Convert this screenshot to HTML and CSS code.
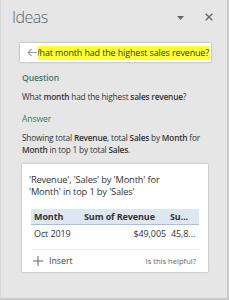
FILE: index.html
```html
<!DOCTYPE html>
<html>
<head>
<meta charset="utf-8">
<link rel="stylesheet" href="styles.css">
</head>
<body>
<div class="panel">
  <div class="header">
    <div class="title">Ideas</div>
    <div class="tools">
      <svg class="caret" width="7" height="4" viewBox="0 0 7 4"><path d="M0 0H7L3.5 4Z" fill="#666"/></svg>
      <svg class="close" width="8" height="8" viewBox="0 0 8 8"><path d="M0.7 0.7L7.3 7.3M7.3 0.7L0.7 7.3" stroke="#666" stroke-width="1.3"/></svg>
    </div>
  </div>
  <div class="search">
    <svg class="back" width="10" height="9" viewBox="0 0 10 9"><path d="M10 4.5H1.2M4.6 1L1.1 4.5L4.6 8" stroke="#a0a0a0" stroke-width="1.1" fill="none"/></svg>
    <div class="query"><span>What month had the highest sales revenue?</span></div>
  </div>
  <div class="content">
    <div class="label">Question</div>
    <p class="text">What <b>month</b> had the highest <b>sales revenue</b>?</p>
    <div class="label light">Answer</div>
    <p class="text">Showing total <b>Revenue</b>, total <b>Sales</b> by <b>Month</b> for<br><b>Month</b> in top 1 by total <b>Sales</b>.</p>
    <div class="card">
      <div class="card-title">'Revenue', 'Sales' by 'Month' for<br>'Month' in top 1 by 'Sales'</div>
      <div class="table">
        <div class="row head">
          <div class="c1">Month</div>
          <div class="c2">Sum of Revenue</div>
          <div class="c3">Su...</div>
        </div>
        <div class="row body">
          <div class="c1">Oct 2019</div>
          <div class="c2 num">$49,005</div>
          <div class="c3">45,8...</div>
        </div>
      </div>
      <div class="card-foot">
        <div class="insert"><svg width="10" height="10" viewBox="0 0 10 10"><path d="M5 0V10M0 5H10" stroke="#555" stroke-width="0.9"/></svg><span>Insert</span></div>
        <div class="helpful">Is this helpful?</div>
      </div>
    </div>
  </div>
</div>
</body>
</html>
```
FILE: styles.css
```css
* { box-sizing: border-box; }
html, body { margin: 0; padding: 0; }
body {
  font-family: "Open Sans", "Noto Sans", sans-serif;
  color: #333;
  background: #e6e6e6;
}
.panel {
  width: 229px;
  height: 300px;
  background: #e6e6e6;
  border-right: 2px solid #c9c9c9;
  border-bottom: 2px solid #c9c9c9;
  border-left: 1px solid #d6d6d6;
  overflow: hidden;
}
.header {
  display: flex;
  justify-content: space-between;
  align-items: center;
  height: 34px;
  padding: 0 14px 0 11px;
}
.title {
  font-size: 16px;
  font-weight: 300;
  color: #58686f;
  letter-spacing: -0.5px;
  margin-top: -1px;
}
.tools {
  display: flex;
  align-items: center;
  gap: 21px;
}
.caret { margin-top: 1px; }
.search {
  margin: 9px 0 0 19px;
  width: 191px;
  height: 19px;
  background: #fff;
  box-shadow: 0 0 2px rgba(0,0,0,0.35);
  display: flex;
  align-items: center;
  padding: 0 1px 0 7px;
}
.back { flex: none; }
.query {
  flex: 1;
  overflow: hidden;
  display: flex;
  justify-content: flex-end;
  margin-left: 1px;
}
.query span {
  background: #ffff33;
  white-space: nowrap;
  font-size: 8.95px;
  line-height: 14px;
  color: #333;
  padding: 0 1px;
  letter-spacing: -0.12px;
}
.content {
  padding: 0 19px 0 21px;
}
.label {
  font-size: 8.6px;
  font-weight: 600;
  color: #3a7a66;
  margin-top: 10px;
  line-height: 12px;
  letter-spacing: -0.1px;
}
.label.light { font-weight: 500; }
.text {
  font-size: 8.3px;
  line-height: 12px;
  margin: 7px 0 0;
  color: #333;
  letter-spacing: -0.2px;
  white-space: nowrap;
}
.text b { font-weight: 600; }
.card {
  margin-top: 8px;
  background: #fff;
  box-shadow: 0 0 2px rgba(0,0,0,0.3);
  padding: 10px 9px 0 7px;
  height: 108px;
}
.card-title {
  font-size: 9.3px;
  line-height: 12px;
  color: #333;
  letter-spacing: -0.15px;
  white-space: nowrap;
}
.table {
  margin-top: 11px;
  font-size: 9px;
  margin-left: 2px;
}
.row {
  display: grid;
  grid-template-columns: 45px 82px 1fr;
  column-gap: 5px;
  padding-left: 3px;
  white-space: nowrap;
  letter-spacing: -0.1px;
  line-height: 12px;
}
.row.head {
  height: 16px;
  align-items: center;
  background: #dde7f2;
  border-bottom: 1px solid #a8c0dc;
  font-weight: 700;
}
.row.head .c3 { margin-left: -1px; }
.row.body {
  height: 25px;
  padding-top: 3px;
  align-items: start;
  border-bottom: 1px solid #ececec;
}
.num { text-align: right; }
.c3 { overflow: hidden; }
.card-foot {
  display: flex;
  justify-content: space-between;
  align-items: center;
  height: 22px;
  padding: 0 3px 0 4px;
}
.insert {
  display: flex;
  align-items: center;
  gap: 6px;
  font-size: 8.8px;
  color: #444;
}
.helpful {
  font-size: 7.6px;
  color: #666;
}
```
